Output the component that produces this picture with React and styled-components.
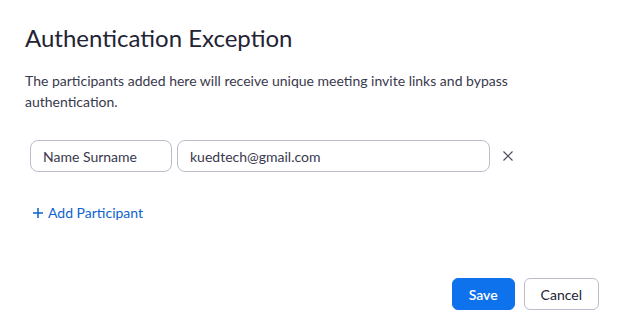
import styled, { createGlobalStyle } from 'styled-components';

const GlobalStyle = createGlobalStyle`
  body {
    margin: 0;
    background: #fff;
    font-family: Lato, "Open Sans", sans-serif;
  }
`;

const Dialog = styled.div`
  width: 620px;
  height: 320px;
  box-sizing: border-box;
  padding: 22px 21px 0 25px;
  display: flex;
  flex-direction: column;
  color: #232333;
`;

const Title = styled.h1`
  margin: 0;
  font-size: 24px;
  font-weight: 400;
  line-height: 32px;
  color: #232333;
`;

const Description = styled.p`
  margin: 16px 0 0;
  font-size: 14px;
  line-height: 21px;
  color: #39394d;
  max-width: 560px;
`;

const Row = styled.div`
  display: flex;
  align-items: center;
  gap: 5px;
  margin: 28px 0 0 5px;
`;

const Field = styled.input`
  box-sizing: border-box;
  width: ${p => p.$width}px;
  height: 32px;
  padding: 0 12px;
  border: 1px solid #bcbbcc;
  border-radius: 8px;
  font-family: inherit;
  font-size: 14px;
  color: #39394d;
  outline: none;
`;

const RemoveButton = styled.button`
  margin-left: 5px;
  width: 16px;
  height: 16px;
  padding: 0;
  border: none;
  background: none;
  display: flex;
  align-items: center;
  justify-content: center;
  cursor: pointer;
`;

const AddLink = styled.button`
  align-self: flex-start;
  margin: 32px 0 0 8px;
  padding: 0;
  border: none;
  background: none;
  display: flex;
  align-items: center;
  gap: 5px;
  font-family: inherit;
  font-size: 14px;
  color: #0e63d0;
  cursor: pointer;
`;

const Footer = styled.div`
  margin-top: auto;
  margin-bottom: 10px;
  display: flex;
  justify-content: flex-end;
  gap: 9px;
`;

const Button = styled.button`
  box-sizing: border-box;
  height: 32px;
  padding: 0 ${p => (p.$primary ? 16 : 16)}px;
  border-radius: 6px;
  border: 1px solid ${p => (p.$primary ? '#0e72ed' : '#bcbbcc')};
  background: ${p => (p.$primary ? '#0e72ed' : '#fff')};
  color: ${p => (p.$primary ? '#fff' : '#232333')};
  font-family: inherit;
  font-size: 14px;
  font-weight: ${p => (p.$primary ? 600 : 400)};
  cursor: pointer;
`;

export default function App() {
  return (
    <>
      <GlobalStyle />
      <Dialog>
        <Title>Authentication Exception</Title>
        <Description>
          The participants added here will receive unique meeting invite links and bypass
          authentication.
        </Description>
        <Row>
          <Field $width={142} defaultValue="Name Surname" />
          <Field $width={313} defaultValue="kuedtech@gmail.com" />
          <RemoveButton aria-label="Remove">
            <svg width="10" height="10" viewBox="0 0 10 10">
              <path d="M0.5 0.5L9.5 9.5M9.5 0.5L0.5 9.5" stroke="#4a4a5c" strokeWidth="1.2" fill="none" />
            </svg>
          </RemoveButton>
        </Row>
        <AddLink>
          <svg width="10" height="10" viewBox="0 0 10 10">
            <path d="M5 0V10M0 5H10" stroke="#0e63d0" strokeWidth="1.5" fill="none" />
          </svg>
          Add Participant
        </AddLink>
        <Footer>
          <Button $primary>Save</Button>
          <Button>Cancel</Button>
        </Footer>
      </Dialog>
    </>
  );
}
